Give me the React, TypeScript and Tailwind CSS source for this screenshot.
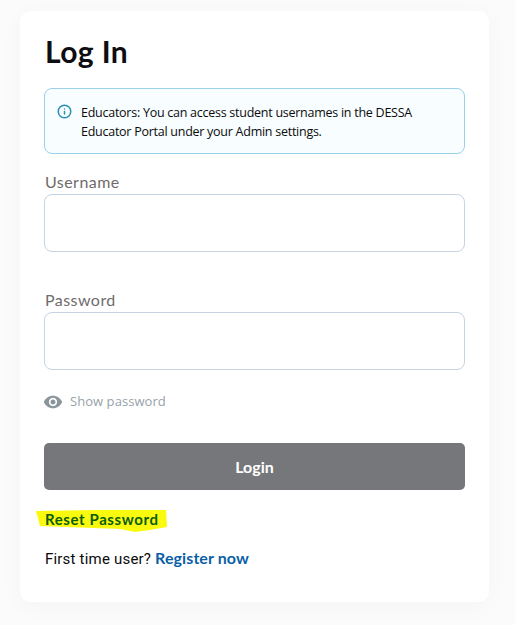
import { Info } from "lucide-react";

const headingFont = "font-['Lato','Liberation_Sans',sans-serif]";

function Field({ label, className }: { label: string; className?: string }) {
  return (
    <div className={className}>
      <label className={`block ml-[1px] text-[16px] leading-[20px] text-[#6f6b6b] tracking-[0.45px] ${headingFont}`}>{label}</label>
      <input className="block w-full h-[58px] mt-[2px] rounded-[8px] border border-[#c5d3e2] bg-white" />
    </div>
  );
}

export default function App() {
  return (
    <div className="w-[515px] h-[625px] overflow-hidden bg-[#fbfbfb] pt-[11px] pl-[20px] font-['Open_Sans','Noto_Sans',sans-serif]">
      <div className="w-[469px] h-[591px] rounded-[10px] bg-white shadow-[0_4px_24px_rgba(0,0,0,0.03)] px-[24px] pt-[21px]">
        <h1 className={`text-[30px] leading-[39px] font-bold text-[#0d0d12] tracking-[0.4px] ml-[1px] ${headingFont}`}>Log In</h1>

        <div className="mt-[17px] h-[66px] rounded-[8px] border border-[#9ad0ea] bg-[#f8fdff] flex pl-[12px] pt-[14px] gap-[9px]">
          <Info className="w-[15px] h-[15px] mt-[1px] shrink-0 text-[#2a8fb5]" strokeWidth={2.4} />
          <p className="text-[12.5px] leading-[19px] tracking-[-0.26px] text-[#0b0b0b]">
            Educators: You can access student usernames in the DESSA<br />Educator Portal under your Admin settings.
          </p>
        </div>

        <Field label="Username" className="mt-[18px]" />
        <Field label="Password" className="mt-[38px]" />

        <div className="mt-[22px] h-[20px] flex items-center gap-[7px]">
          <svg className="w-[20px] h-[20px] ml-[-1px]" viewBox="0 0 24 24" fill="#8a959c" aria-hidden="true">
            <path d="M12 4.5C7 4.5 2.73 7.61 1 12c1.73 4.39 6 7.5 11 7.5s9.27-3.11 11-7.5c-1.73-4.39-6-7.5-11-7.5zM12 17c-2.76 0-5-2.24-5-5s2.24-5 5-5 5 2.24 5 5-2.24 5-5 5zm0-8c-1.66 0-3 1.34-3 3s1.34 3 3 3 3-1.34 3-3-1.34-3-3-3z" />
          </svg>
          <span className="text-[13px] tracking-[0.05px] text-[#97a2a9]">Show password</span>
        </div>

        <button className={`mt-[31px] w-full h-[47px] rounded-[5px] bg-[#76777b] text-white text-[16px] font-bold ${headingFont}`}>Login</button>

        <div className="relative w-fit mt-[20px] ml-[1px]">
          <svg className="absolute left-[-9px] top-[-1px] w-[131px] h-[24px]" viewBox="0 0 131 24" aria-hidden="true">
            <path d="M0 2 L60 1 L130 1 L131 18 L114 21 L99 23 L84 20 L4 17 Z" fill="#fafa0f" />
          </svg>
          <a className={`relative block text-[15px] leading-[18px] font-bold text-[#0b5c0b] tracking-[0.6px] ${headingFont}`}>Reset Password</a>
        </div>

        <div className="mt-[20px] ml-[1px] text-[15px] leading-[20px] tracking-[0.2px] text-[#0b0b0b] font-['Roboto',sans-serif]">
          First time user? <a className={`text-[16px] font-bold text-[#0b5fa5] tracking-[0.1px] ${headingFont}`}>Register now</a>
        </div>
      </div>
    </div>
  );
}
